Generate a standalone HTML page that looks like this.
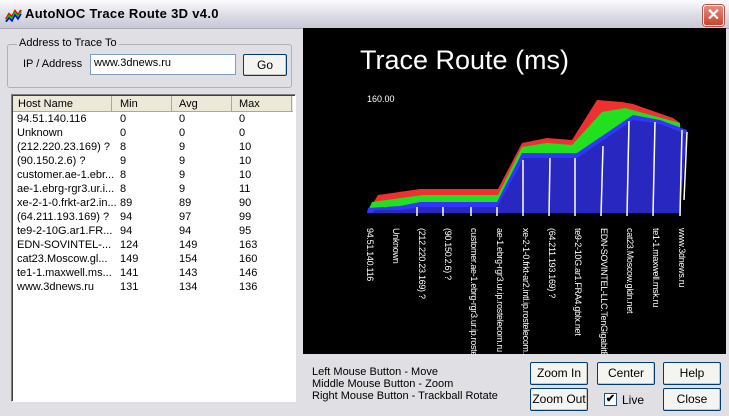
<!DOCTYPE html>
<html><head><style>
*{margin:0;padding:0;box-sizing:border-box}
body{width:729px;height:416px;overflow:hidden;background:#e0dfe3;font-family:"Liberation Sans",sans-serif;font-size:11px;color:#000;position:relative}
.a{position:absolute}
.title{left:0;top:0;width:729px;height:29px;background:linear-gradient(#fbfbfd,#e4e4ec 40%,#c7c7d6);border-bottom:1px solid #a8a8b8}
.btn{position:absolute;background:#f4f4f0;border:1px solid #003c74;border-radius:2px;text-align:center;font-size:12px;line-height:20px;box-shadow:inset -1px -1px 0 #c8c8c0}
.row{position:absolute;left:17px;font-size:11px;white-space:nowrap}
.row span{position:absolute}
.lbl{position:absolute;color:#fff;font-size:9px;transform-origin:0 0;transform:rotate(90deg);white-space:nowrap;letter-spacing:-0.3px}
</style></head><body>
<div class="a title"></div>
<svg class="a" style="left:5px;top:8px" width="18" height="14"><polyline points="1,11 4,6 7,9 10,3 13,7 16,2" fill="none" stroke="#e00" stroke-width="2"/><polyline points="1,13 4,8 7,11 10,5 13,9 16,4" fill="none" stroke="#0c0" stroke-width="2"/><polyline points="1,14 4,10 7,13 10,7 13,11 16,6" fill="none" stroke="#00e" stroke-width="1.5"/></svg>
<div class="a" style="left:25px;top:6px;font-size:13px;font-weight:bold;letter-spacing:0.3px">AutoNOC Trace Route 3D v4.0</div>
<div class="a" style="left:703px;top:5px;width:21px;height:21px;border-radius:3px;background:linear-gradient(#e88a7a,#c8442f);border:1px solid #fff;box-shadow:0 0 0 1px #b05050;color:#fff;font-size:16px;font-weight:bold;text-align:center;line-height:19px">✕</div>

<div class="a" style="left:7px;top:44px;width:285px;height:44px;border:1px solid #b0b0b8;border-radius:3px"></div>
<div class="a" style="left:17px;top:37px;background:#e0dfe3;padding:0 2px;font-size:11px">Address to Trace To</div>
<div class="a" style="left:23px;top:58px">IP / Address</div>
<div class="a" style="left:90px;top:54px;width:146px;height:21px;background:#fff;border:1px solid #7f9db9;padding:2px 3px">www.3dnews.ru</div>
<div class="btn" style="left:243px;top:54px;width:44px;height:22px">Go</div>

<div class="a" style="left:11px;top:94px;width:285px;height:308px;background:#fff;border:1px solid #808080;border-right-color:#fff;border-bottom-color:#fff;box-shadow:inset 1px 1px 0 #404040"></div>
<div class="a" style="left:13px;top:96px;width:280px;height:16px;background:#ece9d8;border-bottom:1px solid #aca899"></div>
<div class="a" style="left:111px;top:96px;width:1px;height:16px;background:#aca899"></div>
<div class="a" style="left:171px;top:96px;width:1px;height:16px;background:#aca899"></div>
<div class="a" style="left:231px;top:96px;width:1px;height:16px;background:#aca899"></div>
<div class="a" style="left:291px;top:96px;width:1px;height:16px;background:#aca899"></div>
<div class="row" style="top:98px"><span style="left:1px">Host Name</span><span style="left:103px">Min</span><span style="left:162px">Avg</span><span style="left:222px">Max</span></div>
<div class="row" style="top:113px"><span>94.51.140.116</span><span style="left:103px">0</span><span style="left:162px">0</span><span style="left:222px">0</span></div>
<div class="row" style="top:127px"><span>Unknown</span><span style="left:103px">0</span><span style="left:162px">0</span><span style="left:222px">0</span></div>
<div class="row" style="top:141px"><span>(212.220.23.169) ?</span><span style="left:103px">8</span><span style="left:162px">9</span><span style="left:222px">10</span></div>
<div class="row" style="top:155px"><span>(90.150.2.6) ?</span><span style="left:103px">9</span><span style="left:162px">9</span><span style="left:222px">10</span></div>
<div class="row" style="top:169px"><span>customer.ae-1.ebr...</span><span style="left:103px">8</span><span style="left:162px">9</span><span style="left:222px">10</span></div>
<div class="row" style="top:183px"><span>ae-1.ebrg-rgr3.ur.i...</span><span style="left:103px">8</span><span style="left:162px">9</span><span style="left:222px">11</span></div>
<div class="row" style="top:197px"><span>xe-2-1-0.frkt-ar2.in...</span><span style="left:103px">89</span><span style="left:162px">89</span><span style="left:222px">90</span></div>
<div class="row" style="top:211px"><span>(64.211.193.169) ?</span><span style="left:103px">94</span><span style="left:162px">97</span><span style="left:222px">99</span></div>
<div class="row" style="top:225px"><span>te9-2-10G.ar1.FR...</span><span style="left:103px">94</span><span style="left:162px">94</span><span style="left:222px">95</span></div>
<div class="row" style="top:239px"><span>EDN-SOVINTEL-...</span><span style="left:103px">124</span><span style="left:162px">149</span><span style="left:222px">163</span></div>
<div class="row" style="top:253px"><span>cat23.Moscow.gl...</span><span style="left:103px">149</span><span style="left:162px">154</span><span style="left:222px">160</span></div>
<div class="row" style="top:267px"><span>te1-1.maxwell.ms...</span><span style="left:103px">141</span><span style="left:162px">143</span><span style="left:222px">146</span></div>
<div class="row" style="top:281px"><span>www.3dnews.ru</span><span style="left:103px">131</span><span style="left:162px">134</span><span style="left:222px">136</span></div>

<div class="a" style="left:303px;top:28px;width:423px;height:326px;background:#000;overflow:hidden">
<div class="a" style="left:57px;top:17px;color:#fff;font-size:27px">Trace Route (ms)</div>
<div class="a" style="left:64px;top:66px;color:#fff;font-size:9px">160.00</div>
<svg class="a" style="left:-303px;top:-28px" width="729" height="416">
<polygon fill="#f03030" points="367,213 378,195 420,189 498,189 522,143 547,138 572,140 597,100 622,102 633,104 673,118 680,123 680,213"/>
<polygon fill="#20e020" points="367,213 372,202 423,195 498,195 522,147 547,143 572,145 602,112 625,108 680,123 680,213"/>
<polygon fill="#3434ff" points="367,213 368,208 400,206 420,202 497,202 522,153 577,153 633,115 660,120 687,130 680,213"/>
<polygon fill="#2828c0" points="372,213 375,210 400,210 420,207 497,207 524,158 577,158 633,120 660,124 686,134 680,213"/>
<g stroke="#fff" stroke-width="1.5">
<line x1="417" y1="207" x2="417" y2="216"/><line x1="443" y1="207" x2="443" y2="216"/><line x1="471" y1="207" x2="471" y2="216"/><line x1="497" y1="207" x2="497" y2="216"/><line x1="523" y1="160" x2="523" y2="216"/><line x1="550" y1="158" x2="549" y2="216"/><line x1="575" y1="158" x2="575" y2="216"/><line x1="603" y1="146" x2="601" y2="216"/><line x1="629" y1="121" x2="627" y2="216"/><line x1="655" y1="122" x2="653" y2="216"/><line x1="682" y1="130" x2="680" y2="216"/><line x1="687" y1="132" x2="684" y2="200"/>
</g></svg>
<div class="lbl" style="left:72px;top:200px">94.51.140.116</div>
<div class="lbl" style="left:98px;top:200px">Unknown</div>
<div class="lbl" style="left:124px;top:200px">(212.220.23.169) ?</div>
<div class="lbl" style="left:150px;top:200px">(90.150.2.6) ?</div>
<div class="lbl" style="left:176px;top:200px">customer.ae-1.ebrg-rgr3.ur.ip.rostelecom.ru</div>
<div class="lbl" style="left:202px;top:200px">ae-1.ebrg-rgr3.ur.ip.rostelecom.ru</div>
<div class="lbl" style="left:228px;top:200px">xe-2-1-0.frkt-ar2.intl.ip.rostelecom.ru</div>
<div class="lbl" style="left:254px;top:200px">(64.211.193.169) ?</div>
<div class="lbl" style="left:280px;top:200px">te9-2-10G.ar1.FRA4.gblx.net</div>
<div class="lbl" style="left:306px;top:200px">EDN-SOVINTEL-LLC.TenGigabitEthernet</div>
<div class="lbl" style="left:332px;top:200px">cat23.Moscow.gldn.net</div>
<div class="lbl" style="left:358px;top:200px">te1-1.maxwell.msk.ru</div>
<div class="lbl" style="left:384px;top:200px">www.3dnews.ru</div>
</div>

<div class="a" style="left:312px;top:366px;line-height:12px">Left Mouse Button - Move<br>Middle Mouse Button - Zoom<br>Right Mouse Button - Trackball Rotate</div>
<div class="btn" style="left:530px;top:362px;width:58px;height:23px">Zoom In</div>
<div class="btn" style="left:530px;top:388px;width:58px;height:23px">Zoom Out</div>
<div class="btn" style="left:597px;top:362px;width:58px;height:23px">Center</div>
<div class="btn" style="left:663px;top:362px;width:58px;height:23px">Help</div>
<div class="btn" style="left:663px;top:388px;width:58px;height:23px">Close</div>
<div class="a" style="left:604px;top:393px;width:13px;height:13px;background:#fff;border:1px solid #1c5180;font-size:11px;line-height:11px;text-align:center;font-weight:bold">✔</div>
<div class="a" style="left:622px;top:393px;font-size:12px">Live</div>
</body></html>
